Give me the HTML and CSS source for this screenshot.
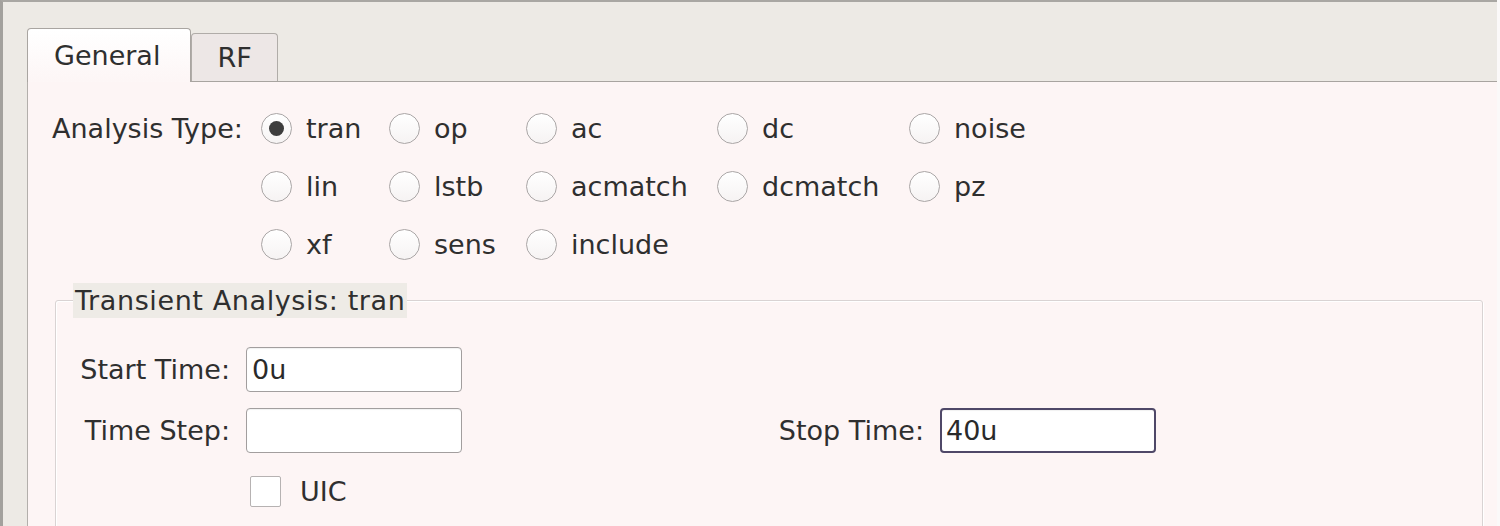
FILE: index.html
```html
<!DOCTYPE html>
<html>
<head>
<meta charset="utf-8">
<link rel="stylesheet" href="styles.css">
</head>
<body>
<div class="window">
  <div class="tabbar">
    <div class="tab tab-active">General</div>
    <div class="tab">RF</div>
  </div>
  <div class="panel">
    <div class="analysis">
      <div class="analysis-label">Analysis Type:</div>
      <label class="opt"><span class="radio checked"></span>tran</label>
      <label class="opt"><span class="radio"></span>op</label>
      <label class="opt"><span class="radio"></span>ac</label>
      <label class="opt"><span class="radio"></span>dc</label>
      <label class="opt"><span class="radio"></span>noise</label>

      <div></div>
      <label class="opt"><span class="radio"></span>lin</label>
      <label class="opt"><span class="radio"></span>lstb</label>
      <label class="opt"><span class="radio"></span>acmatch</label>
      <label class="opt"><span class="radio"></span>dcmatch</label>
      <label class="opt"><span class="radio"></span>pz</label>

      <div></div>
      <label class="opt"><span class="radio"></span>xf</label>
      <label class="opt"><span class="radio"></span>sens</label>
      <label class="opt"><span class="radio"></span>include</label>
    </div>

    <fieldset class="group">
      <legend class="group-title">Transient Analysis: tran</legend>
      <div class="form">
        <div class="flabel r1">Start Time:</div>
        <input class="field r1 c2" type="text" value="0u">

        <div class="flabel r2">Time Step:</div>
        <input class="field r2 c2" type="text" value="">
        <div class="flabel r2 c4">Stop Time:</div>
        <input class="field focused r2 c5" type="text" value="40u">

        <label class="check r3 c2"><span class="box"></span>UIC</label>
      </div>
    </fieldset>
  </div>
</div>
</body>
</html>
```

FILE: styles.css
```css
html, body {
  margin: 0;
  padding: 0;
}

body {
  width: 1500px;
  height: 526px;
  overflow: hidden;
  background: #fbf9f9;
  font-family: "DejaVu Sans", "Liberation Sans", sans-serif;
  font-size: 27px;
  color: #2f2f2f;
}

.window {
  width: 1497px;
  height: 526px;
  border-top: 2px solid #a9a7a3;
  border-left: 3px solid #a3a19d;
  background: #edeae5;
  padding-left: 24px;
  box-sizing: border-box;
  overflow: hidden;
}

.tabbar {
  display: flex;
  align-items: flex-end;
  padding-top: 26px;
  height: 53px;
  box-sizing: content-box;
}

.tab {
  height: 47px;
  display: flex;
  align-items: center;
  padding: 0 25px;
  background: #ede7e6;
  border: 1px solid #b0aca8;
  border-bottom: none;
  border-radius: 4px 4px 0 0;
  color: #2f2f2f;
}

.tab-active {
  height: 53px;
  padding: 0 30px 0 26px;
  background: linear-gradient(#ffffff, #fdf6f6);
  border-color: #a9a5a1;
  margin-bottom: -1px;
  position: relative;
  z-index: 1;
}

.panel {
  background: #fdf5f5;
  border-top: 1px solid #a8a4a0;
  border-left: 1px solid #b3afab;
  padding: 30px 14px 60px 24px;
  height: 600px;
}

.analysis {
  display: grid;
  grid-template-columns: 209px 128px 137px 191px 192px auto;
  grid-auto-rows: 32px;
  row-gap: 26px;
  align-items: center;
  justify-content: start;
}

.analysis-label {
  white-space: nowrap;
}

.opt {
  display: flex;
  align-items: center;
  gap: 14px;
  white-space: nowrap;
}

.radio {
  width: 31px;
  height: 31px;
  box-sizing: border-box;
  border-radius: 50%;
  border: 1.5px solid #aaa6a6;
  background: linear-gradient(#ffffff, #f6f3f3);
  display: flex;
  align-items: center;
  justify-content: center;
  flex: none;
}

.radio.checked::after {
  content: "";
  width: 15px;
  height: 15px;
  border-radius: 50%;
  background: #3d3d3d;
}

.group {
  margin: 23px 0 0 3px;
  padding: 29px 23px 60px 23px;
  border: 1px solid #d9d3d3;
  border-radius: 3px;
  box-shadow: inset 1px 1px 0 #ffffff, 1px 1px 0 #ffffff;
  min-width: 0;
}

.group-title {
  margin-left: -6px;
  padding: 0 2px;
  line-height: 35px;
  height: 35px;
  background: #eeebe6;
  color: #2f2f2f;
  letter-spacing: 0.6px;
}

.form {
  display: grid;
  grid-template-columns: 151px 216px 284px 146px 216px;
  grid-template-rows: 45px 45px 45px;
  column-gap: 16px;
  row-gap: 16px;
  align-items: center;
  justify-content: start;
}

.flabel {
  justify-self: end;
  white-space: nowrap;
  grid-column: 1;
}

.r1 { grid-row: 1; }
.r2 { grid-row: 2; }
.r3 { grid-row: 3; }
.c2 { grid-column: 2; }
.c4 { grid-column: 4; }
.c5 { grid-column: 5; }

.field {
  width: 216px;
  height: 45px;
  box-sizing: border-box;
  margin: 0;
  padding: 0 0 0 5px;
  border: 1px solid #a29e9e;
  border-radius: 4px;
  background: #ffffff;
  box-shadow: inset 0 1px 1px rgba(0, 0, 0, 0.06);
  font-family: "DejaVu Sans", "Liberation Sans", sans-serif;
  font-size: 27px;
  color: #2a2a2a;
  outline: none;
}

.field.focused {
  border: 2px solid #4f4868;
  padding-left: 4px;
}

.check {
  display: flex;
  align-items: center;
  gap: 19px;
  padding-left: 4px;
}

.box {
  width: 31px;
  height: 31px;
  box-sizing: border-box;
  border: 1.5px solid #b6b2b2;
  border-radius: 2px;
  background: #ffffff;
  flex: none;
}
```
